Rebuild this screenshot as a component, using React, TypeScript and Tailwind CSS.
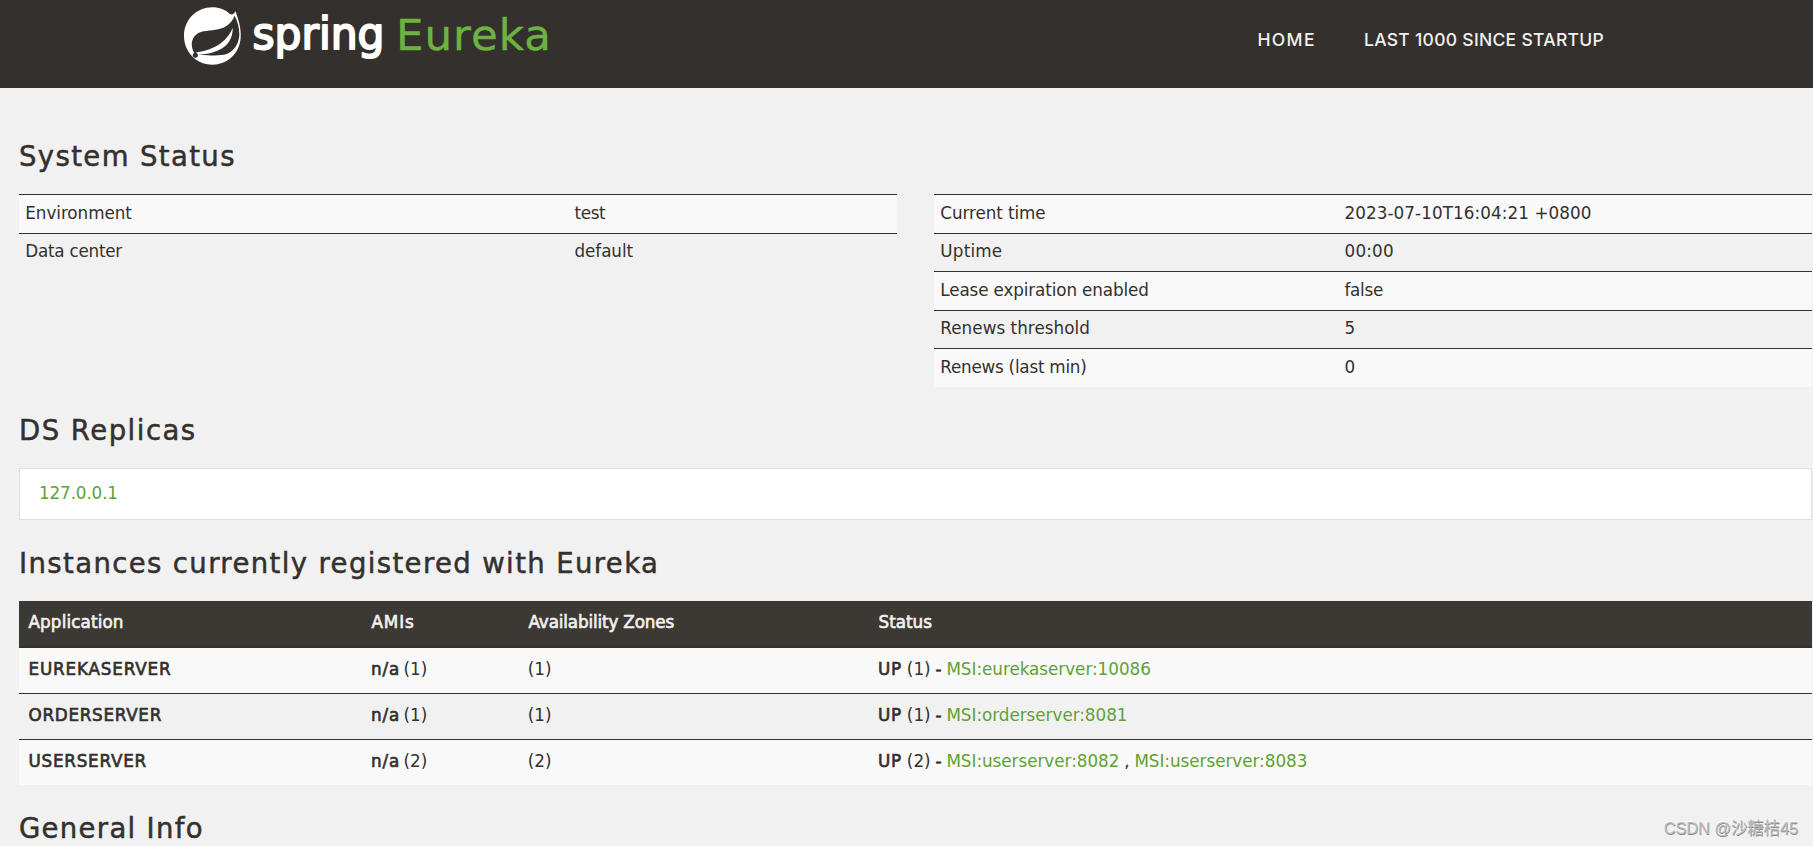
import type { ReactNode } from "react";

type Cell = { text: string; track: string };

const leftStatus: [Cell, Cell][] = [
  [{ text: "Environment", track: "tracking-[-0.06px]" }, { text: "test", track: "tracking-[-0.35px]" }],
  [{ text: "Data center", track: "tracking-[-0.25px]" }, { text: "default", track: "tracking-[-0.08px]" }],
];

const rightStatus: [Cell, Cell][] = [
  [{ text: "Current time", track: "tracking-[-0.08px]" }, { text: "2023-07-10T16:04:21 +0800", track: "tracking-[0.07px]" }],
  [{ text: "Uptime", track: "tracking-[0.2px]" }, { text: "00:00", track: "tracking-[0.2px]" }],
  [{ text: "Lease expiration enabled", track: "tracking-[-0.13px]" }, { text: "false", track: "tracking-[-0.3px]" }],
  [{ text: "Renews threshold", track: "tracking-[0.04px]" }, { text: "5", track: "tracking-normal" }],
  [{ text: "Renews (last min)", track: "tracking-[-0.24px]" }, { text: "0", track: "tracking-normal" }],
];

const instances = [
  { name: "EUREKASERVER", track: "tracking-[0.82px]", count: 1, links: ["MSI:eurekaserver:10086"] },
  { name: "ORDERSERVER", track: "tracking-[0.7px]", count: 1, links: ["MSI:orderserver:8081"] },
  { name: "USERSERVER", track: "tracking-[0.75px]", count: 2, links: ["MSI:userserver:8082", "MSI:userserver:8083"] },
];

function Bold({ children, className = "" }: { children: ReactNode; className?: string }) {
  return <b className={`font-normal [-webkit-text-stroke:0.65px_currentColor] ${className}`}>{children}</b>;
}

function Heading({ children, className }: { children: ReactNode; className: string }) {
  return (
    <h1 className={`h-9 whitespace-nowrap text-[27.5px] leading-9 [-webkit-text-stroke:0.5px_currentColor] ${className}`}>
      {children}
    </h1>
  );
}

function StatusTable({ rows, columns, className }: { rows: [Cell, Cell][]; columns: string; className: string }) {
  return (
    <div className={className}>
      {rows.map(([label, value]) => (
        <div
          key={label.text}
          className={`grid h-[38.5px] items-center border-t border-[#34302d] pb-[2px] odd:bg-[#f9f9f9] ${columns}`}
        >
          <span className={`pl-[6.3px] ${label.track}`}>{label.text}</span>
          <span className={`pl-[6px] ${value.track}`}>{value.text}</span>
        </div>
      ))}
    </div>
  );
}

function Logo() {
  return (
    <svg width="400" height="88" viewBox="0 0 400 88" role="img" aria-label="spring Eureka">
      <g transform="translate(0 4) scale(0.33333)">
        <path
          fill="#fff"
          d="M166 21 C175 45 184 72 182 102 C178 150 141 182 97 182 C49 182 12 144 12 96 C12 48 49 10 97 10 C118 10 136 17 150 30 C157 34 163 29 166 21 Z"
        />
        <path
          fill="#34302d"
          d="M164 35 C153 61 137 70 114 76 C92 82 66 78 48 92 C32 106 32 128 43 147 L54 153 C80 152 116 158 140 150 C166 140 178 114 178 90 C178 70 172 50 164 35 Z"
        />
        <path fill="#fff" d="M158 71 C148 98 126 118 102 130 C84 139 64 143 46 146 L54 153 C82 150 112 145 132 129 C150 115 159 94 158 71 Z" />
        <circle cx="46" cy="154" r="7.5" fill="#34302d" />
      </g>
      <text
        x="72.5"
        y="49.2"
        fill="#fff"
        stroke="#fff"
        strokeWidth="2"
        strokeLinejoin="round"
        fontFamily="DejaVu Sans, sans-serif"
        fontSize="44"
        textLength="132"
        lengthAdjust="spacingAndGlyphs"
      >
        spring
      </text>
      <text
        x="216"
        y="50"
        fill="#6db33f"
        stroke="#6db33f"
        strokeWidth="0.4"
        strokeLinejoin="round"
        fontFamily="DejaVu Sans, sans-serif"
        fontSize="43.5"
        textLength="155"
      >
        Eureka
      </text>
    </svg>
  );
}

export default function App() {
  return (
    <div className="relative h-[846px] w-[1813px] overflow-hidden bg-[#f1f1f1] font-['DejaVu_Sans',sans-serif] text-[16.8px] leading-6 text-[#34302d]">
      <header className="flex h-[88px] justify-between bg-[#34302d] pl-[180px] pr-[209px]">
        <Logo />
        <nav className="flex h-20 items-center gap-12 whitespace-nowrap font-['Inter',sans-serif] text-[17.5px] font-medium text-[#f1f1f1]">
          <a className="tracking-[1.4px]">HOME</a>
          <a className="tracking-[0.29px]">LAST 1000 SINCE STARTUP</a>
        </nav>
      </header>

      <main className="pl-[19px] pr-px">
        <Heading className="mb-[20.2px] mt-[50px] tracking-[1.38px]">System Status</Heading>
        <div className="flex justify-between">
          <StatusTable rows={leftStatus} columns="grid-cols-[549.5px_1fr]" className="w-[878px]" />
          <StatusTable rows={rightStatus} columns="grid-cols-[404.5px_1fr]" className="w-[878px]" />
        </div>

        <Heading className="mb-5 mt-[25.3px] tracking-[1.5px]">DS Replicas</Heading>
        <div className="flex h-[52px] items-center border border-[#dddddd] bg-white pb-[2px] pl-[19px]">
          <a className="tracking-[-0.13px] text-[#5fa134]">127.0.0.1</a>
        </div>

        <Heading className="mb-5 mt-[25px] tracking-[1.38px]">Instances currently registered with Eureka</Heading>
        <div>
          <div className="grid h-[47px] grid-cols-[343px_157px_350px_1fr] items-center border-b-2 border-[#34302d] bg-[#3c3833] pb-[2px] text-[#f1f1f1]">
            <Bold className="pl-[9.5px] tracking-[0.12px]">Application</Bold>
            <Bold className="pl-[9.5px] tracking-[0.85px]">AMIs</Bold>
            <Bold className="pl-[9.5px] tracking-[-0.15px]">Availability Zones</Bold>
            <Bold className="pl-[9.5px]">Status</Bold>
          </div>
          {instances.map((app, i) => (
            <div
              key={app.name}
              className={`grid grid-cols-[343px_157px_350px_1fr] items-center whitespace-pre pb-[2.6px] ${
                i === 0 ? "h-[45px]" : "h-[46px] border-t border-[#34302d]"
              } ${i % 2 === 0 ? "bg-[#f9f9f9]" : ""}`}
            >
              <Bold className={`pl-[9.5px] ${app.track}`}>{app.name}</Bold>
              <span className="pl-[9px] [word-spacing:-1.8px]">
                <Bold className="tracking-[0.8px]">n/a</Bold> ({app.count})
              </span>
              <span className="pl-[8.7px]">({app.count})</span>
              <span className="pl-[9px] [word-spacing:-0.5px]">
                <Bold className="tracking-[0.8px]">UP</Bold> ({app.count}) <Bold>-</Bold>{" "}
                {app.links.map((link, n) => (
                  <span key={link}>
                    {n > 0 && " , "}
                    <a className="tracking-[-0.03px] text-[#5fa134]">{link}</a>
                  </span>
                ))}
              </span>
            </div>
          ))}
        </div>

        <Heading className="mt-[25px] tracking-[1.3px]">General Info</Heading>
      </main>

      <div className="absolute bottom-[6px] right-[15px] whitespace-nowrap font-['Liberation_Sans','Noto_Sans_CJK_SC',sans-serif] text-[16.5px] tracking-[-0.15px] text-[#bdbdbd] [text-shadow:0.5px_0.5px_0_#8a8a8a,-1px_-1px_0_#fafafa]">
        CSDN @沙糖桔45
      </div>
    </div>
  );
}
